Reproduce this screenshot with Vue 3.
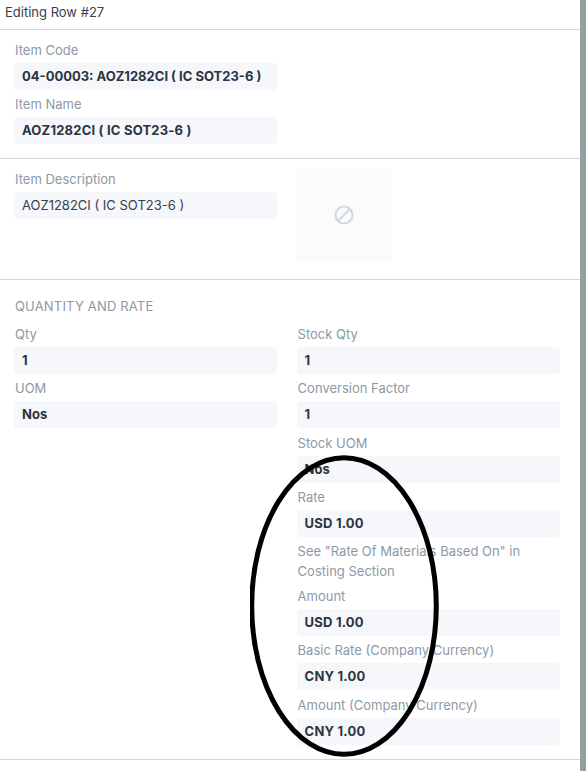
<template>
  <div class="page">
    <div class="panel">
      <div class="panel-head">Editing Row #{{ rowNo }}</div>

      <section class="form-section first">
        <div class="two-col">
          <div class="column">
            <div class="field" v-for="f in itemFields" :key="f.label">
              <div class="field-label">{{ f.label }}</div>
              <div class="field-value bold" :class="{ caps: f.caps }">{{ f.value }}</div>
            </div>
          </div>
        </div>
      </section>

      <section class="form-section desc">
        <div class="two-col">
          <div class="column">
            <div class="field">
              <div class="field-label">Item Description</div>
              <div class="field-value">AOZ1282CI ( IC SOT23-6 )</div>
            </div>
          </div>
          <div class="column">
            <div class="no-image">
              <svg width="20" height="20" viewBox="0 0 20 20" fill="none" stroke="#d1d8dd" stroke-width="2">
                <circle cx="10" cy="10" r="8.5" />
                <path d="M4 16 L16 4" />
              </svg>
            </div>
          </div>
        </div>
      </section>

      <section class="form-section qty">
        <div class="section-title">QUANTITY AND RATE</div>
        <div class="two-col">
          <div class="column">
            <div class="field" v-for="f in leftFields" :key="f.label">
              <div class="field-label">{{ f.label }}</div>
              <div class="field-value bold">{{ f.value }}</div>
            </div>
          </div>
          <div class="column">
            <div class="field" v-for="f in rightFields" :key="f.label">
              <div class="field-label">{{ f.label }}</div>
              <div class="field-value bold" :class="{ caps: f.caps }">{{ f.value }}</div>
              <div v-if="f.help" class="field-help">{{ f.help }}</div>
            </div>
          </div>
        </div>
      </section>
    </div>

    <svg class="annotation" width="200" height="310" viewBox="0 0 200 310" fill="none">
      <ellipse cx="94" cy="155" rx="92.3" ry="148.3" stroke="#000" stroke-width="5" />
    </svg>
  </div>
</template>

<script setup>
const rowNo = 27

const itemFields = [
  { label: 'Item Code', value: '04-00003: AOZ1282CI ( IC SOT23-6 )' },
  { label: 'Item Name', value: 'AOZ1282CI ( IC SOT23-6 )', caps: true }
]

const leftFields = [
  { label: 'Qty', value: '1' },
  { label: 'UOM', value: 'Nos' }
]

const rightFields = [
  { label: 'Stock Qty', value: '1' },
  { label: 'Conversion Factor', value: '1' },
  { label: 'Stock UOM', value: 'Nos' },
  { label: 'Rate', value: 'USD 1.00', caps: true, help: 'See "Rate Of Materials Based On" in Costing Section' },
  { label: 'Amount', value: 'USD 1.00', caps: true },
  { label: 'Basic Rate (Company Currency)', value: 'CNY 1.00', caps: true },
  { label: 'Amount (Company Currency)', value: 'CNY 1.00', caps: true }
]
</script>

<style>
html, body {
  margin: 0;
  background: #fff;
  overflow: hidden;
}
</style>

<style scoped>
.page {
  position: relative;
  width: 586px;
  height: 771px;
  overflow: hidden;
  font-family: Inter, "Noto Sans", sans-serif;
  font-size: 13px;
}
.panel {
  width: 580px;
  height: 771px;
  background: #fff;
  box-shadow: 6px 0 0 #959fa2;
}
.panel-head {
  height: 29px;
  line-height: 25px;
  padding-left: 5px;
  color: #36414c;
  border-bottom: 1px solid #d1d8dd;
}
.form-section {
  box-sizing: border-box;
  border-bottom: 1px solid #d1d8dd;
  padding: 0 20px 0 14px;
}
.form-section.first {
  height: 129px;
  padding-top: 10px;
}
.form-section.desc {
  height: 121px;
  padding-top: 10px;
}
.form-section.qty {
  height: 480px;
  padding-top: 16px;
}
.section-title {
  color: #8d99a6;
  line-height: 20px;
  letter-spacing: 0.18px;
  margin-left: 1px;
  margin-bottom: 8px;
}
.two-col {
  display: grid;
  grid-template-columns: 263px 263px;
  column-gap: 19.6px;
}
.column {
  min-width: 0;
}
.field-label {
  color: #8d99a6;
  line-height: 20px;
  padding-left: 1px;
  margin-top: 4.3px;
  margin-bottom: 3px;
}
.field:first-child .field-label {
  margin-top: 0;
}
.field-value {
  height: 27px;
  line-height: 26px;
  padding-left: 8px;
  background: #f5f7fa;
  border-radius: 3px;
  color: #36414c;
}
.field-value.bold {
  font-weight: 700;
  color: #2b3440;
}
.field-value.caps {
  letter-spacing: 0.2px;
}
.field-help {
  color: #8d99a6;
  line-height: 20px;
  padding: 4px 0 0.9px 1px;
}
.no-image {
  box-sizing: border-box;
  width: 94px;
  height: 93px;
  padding: 0 0 2px 1px;
  background: #fafbfc;
  display: flex;
  align-items: center;
  justify-content: center;
}
.annotation {
  position: absolute;
  left: 250px;
  top: 451px;
}
</style>
